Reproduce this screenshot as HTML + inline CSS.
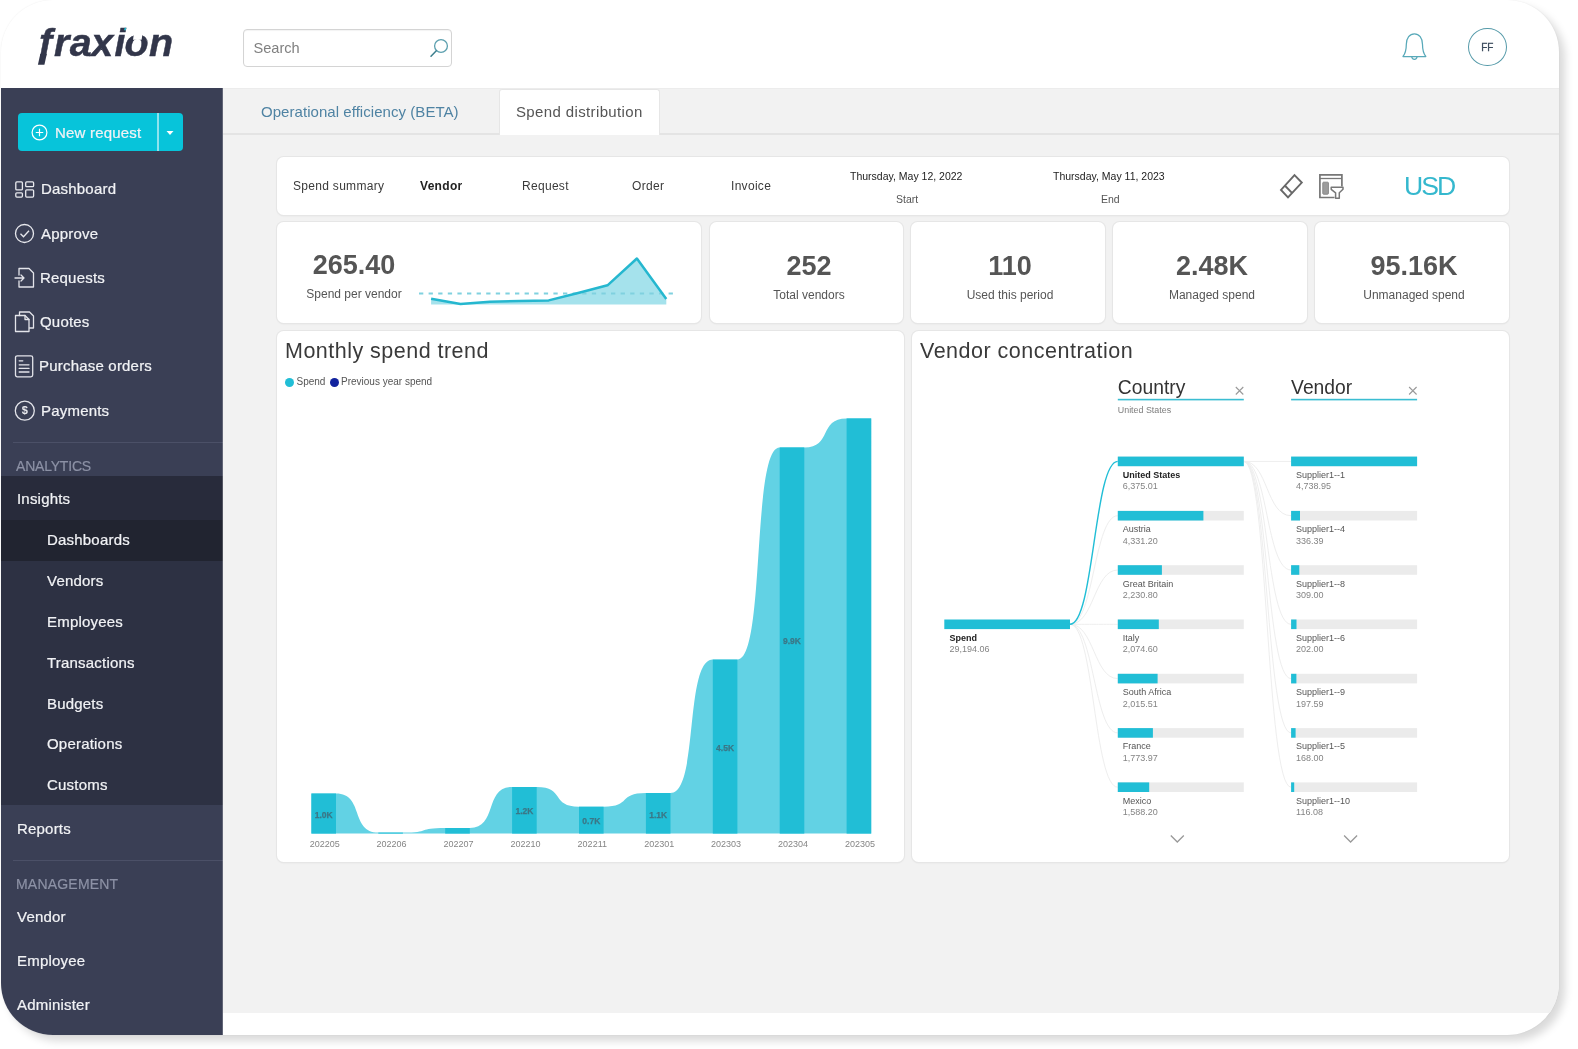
<!DOCTYPE html>
<html lang="en">
<head>
<meta charset="utf-8">
<title>Fraxion - Spend distribution</title>
<style>
*{box-sizing:border-box;margin:0;padding:0}
html,body{width:1578px;height:1049px;overflow:hidden;background:#fff}
body{font-family:"Liberation Sans",sans-serif;color:#333;position:relative}
.abs{position:absolute}
#frame{position:absolute;left:1px;top:0;width:1558px;height:1035px;border-radius:52px;overflow:hidden;background:#fff;
  box-shadow:6px 6px 8px rgba(0,0,0,.15),0 0 1.500px rgba(0,0,0,.08)}
#in{position:absolute;left:-1px;top:0;width:1578px;height:1049px;will-change:transform}
#side{position:absolute;left:0;top:88px;width:223px;height:960px;background:#3a3f55}
#main{position:absolute;left:223px;top:88px;width:1339px;height:925px;background:#f2f2f2}
.t{position:absolute;white-space:nowrap;line-height:1}
.nav{color:#f1f2f5;font-size:15px;-webkit-text-stroke:.22px #f1f2f5;letter-spacing:.2px}
.sec{color:#8c91a5;font-size:14px;letter-spacing:-.2px;-webkit-text-stroke:.2px #8c91a5}
.card{position:absolute;background:#fff;border-radius:6.500px;box-shadow:0 0 0 1px #e6e6e6,0 1px 2px rgba(0,0,0,.08)}
.big{font-weight:bold;font-size:27px;color:#555;text-align:center}
.sub{font-size:12px;color:#555;text-align:center}
.ft{font-size:12px;color:#3a3a3a;letter-spacing:.3px}
.lbl{font-size:9px;fill:#555}
</style>
</head>
<body>
<div id="frame"><div id="in">

<!-- HEADER -->
<div class="t" id="logo" style="left:39px;top:22.500px;font-size:39.500px;font-weight:bold;font-style:italic;color:#32364a;letter-spacing:-.6px;-webkit-text-stroke:.45px #32364a"><span style="letter-spacing:1.800px">f</span><span style="letter-spacing:.4px">r</span>a<span style="letter-spacing:1.500px">x</span><span style="letter-spacing:-1.200px">i</span><span style="letter-spacing:.6px">o</span>n</div>
<svg class="abs" style="left:36px;top:20px" width="140" height="50" viewBox="36 20 140 50"><path d="M40.300 54L46.800 54L44.400 64.700L37.900 64.700z" fill="#32364a"/><path d="M134.200 32L142.800 32L141.600 39.800L133 39.800z" fill="#fff"/><path d="M124.600 27.800L126.300 27.800L125.800 30.200L124.100 30.200z" fill="#27b9d0"/></svg>
<div class="abs" id="search" style="left:243px;top:29px;width:209px;height:38px;border:1px solid #d4d4d4;border-radius:4px;background:#fff;box-shadow:inset 0 1px 1px rgba(0,0,0,.05)"></div>
<div class="t" style="left:253.500px;top:41px;font-size:14.600px;color:#808080">Search</div>

<svg class="abs" style="left:426px;top:36px" width="26" height="24" viewBox="426 36 26 24" fill="none" stroke="#5b9fae" stroke-width="1.300" stroke-linecap="round"><circle cx="441" cy="46" r="6.400"/><path d="M436.300 50.700L431 56.300" stroke="#3d7f8e" stroke-width="1.500"/></svg>
<svg class="abs" style="left:1398px;top:29.200px" width="34" height="36" viewBox="1398 30 34 36" fill="none" stroke="#58a9b9" stroke-width="1.250" stroke-linejoin="round"><path d="M1403 57.500c2.600-3.400 3.300-6.500 3.300-12c0-6.500 3.500-10.700 8.100-10.700s8.100 4.200 8.100 10.700c0 5.500 .7 8.600 3.300 12z"/><path d="M1411.700 57.800c.4 1.700 1.400 2.500 2.700 2.500s2.300-.8 2.700-2.500"/></svg>
<div class="abs" style="left:1468px;top:28px;width:38.500px;height:38px;border-radius:50%;border:1.400px solid #559aa9"></div>
<div class="t" id="ff" style="left:1468px;width:38.500px;text-align:center;top:42.500px;font-size:10px;color:#3b4a5c;-webkit-text-stroke:.3px #3b4a5c">FF</div>

<!-- SIDEBAR -->
<div id="side"></div>
<div class="abs" style="left:0;top:476px;width:223px;height:329px;background:#2d3143"></div>
<div class="abs" style="left:0;top:476px;width:223px;height:44px;background:#282b3b"></div>
<div class="abs" style="left:0;top:520px;width:223px;height:41px;background:#212430"></div>
<div class="abs" style="left:13px;top:442px;width:210px;height:1px;background:#4b5067"></div>
<div class="abs" style="left:13px;top:860px;width:210px;height:1px;background:#4b5067"></div>

<div class="abs" style="left:222px;top:88px;width:1px;height:960px;background:rgba(242,242,242,.22)"></div>
<!-- New request button -->
<div class="abs" style="left:18px;top:113px;width:165px;height:38px;border-radius:4px;background:#07c4da"></div>
<div class="abs" style="left:157px;top:113px;width:2px;height:38px;background:#8fe3ee"></div>
<svg class="abs" style="left:31px;top:124px" width="17" height="17" viewBox="0 0 17 17" fill="none" stroke="#fff" stroke-width="1.2"><circle cx="8.5" cy="8.5" r="7.4"/><path d="M8.5 4.8v7.4M4.8 8.5h7.4"/></svg>
<div class="t nav" style="left:55px;top:125px">New request</div>
<svg class="abs" style="left:165px;top:129.800px" width="10" height="6" viewBox="0 0 10 6"><path d="M1.5 1h7L5 5z" fill="#fff"/></svg>

<!-- nav icons -->
<svg class="abs" style="left:14px;top:178px" width="22" height="22" viewBox="0 0 22 22" fill="none" stroke="#e8e9ee" stroke-width="1.3"><rect x="1.800" y="3.900" width="6.600" height="8" rx="1"/><rect x="11.700" y="3.900" width="7.900" height="4.800" rx="1"/><rect x="1.800" y="14.800" width="6.600" height="4.300" rx="1"/><rect x="11.700" y="11.800" width="7.900" height="7.300" rx="1"/></svg>
<div class="t nav" style="left:41px;top:181px">Dashboard</div>

<svg class="abs" style="left:14px;top:223px" width="22" height="22" viewBox="0 0 22 22" fill="none" stroke="#e8e9ee" stroke-width="1.3"><circle cx="10.5" cy="10.5" r="9"/><path d="M6.5 10.8l3 3 5.5-6"/></svg>
<div class="t nav" style="left:41px;top:226px">Approve</div>

<svg class="abs" style="left:13.800px;top:266px" width="22" height="24" viewBox="0 0 22 24" fill="none" stroke="#e3e4ea" stroke-width="1.3" stroke-linejoin="round" stroke-linecap="round"><path d="M5 9V2.5h10l4.5 4.5v14H5v-6"/><path d="M1 12h9M7 9l3 3-3 3"/></svg>
<div class="t nav" style="left:40px;top:270px">Requests</div>

<svg class="abs" style="left:13.800px;top:310px" width="22" height="24" viewBox="0 0 22 24" fill="none" stroke="#e3e4ea" stroke-width="1.3" stroke-linejoin="round" stroke-linecap="round"><path d="M1.5 5.5h9.5l4 4v12H1.5z"/><path d="M5.5 5.500V2h10l4 4v12h-4"/><path d="M11 5.500v4h4"/></svg>
<div class="t nav" style="left:40px;top:314px">Quotes</div>

<svg class="abs" style="left:13.800px;top:354px" width="22" height="24" viewBox="0 0 22 24" fill="none" stroke="#e3e4ea" stroke-width="1.3" stroke-linejoin="round" stroke-linecap="round"><rect x="1.500" y="1.800" width="17.200" height="21" rx="1.800"/><path d="M5.200 6.800h3.600M5.200 10.800h9.800M5.200 14.400h9.800M5.200 18h9.800"/></svg>
<div class="t nav" style="left:39px;top:358px">Purchase orders</div>

<svg class="abs" style="left:14px;top:400px" width="23" height="23" viewBox="0 0 23 23" fill="none" stroke="#e3e4ea" stroke-width="1.300"><circle cx="10.800" cy="10.700" r="9.500"/></svg>
<div class="t" style="left:21.800px;top:405px;font-size:11px;font-weight:bold;color:#e8e9ee">$</div>
<div class="t nav" style="left:41px;top:403px">Payments</div>

<div class="t sec" style="left:16px;top:459px">ANALYTICS</div>
<div class="t nav" style="left:17px;top:491px">Insights</div>
<div class="t nav" style="left:47px;top:532px">Dashboards</div>
<div class="t nav" style="left:47px;top:573px">Vendors</div>
<div class="t nav" style="left:47px;top:614px">Employees</div>
<div class="t nav" style="left:47px;top:655px">Transactions</div>
<div class="t nav" style="left:47px;top:696px">Budgets</div>
<div class="t nav" style="left:47px;top:736px">Operations</div>
<div class="t nav" style="left:47px;top:777px">Customs</div>
<div class="t nav" style="left:17px;top:821px">Reports</div>
<div class="t sec" style="left:16px;top:877px;letter-spacing:.2px">MANAGEMENT</div>
<div class="t nav" style="left:17px;top:909px">Vendor</div>
<div class="t nav" style="left:17px;top:953px">Employee</div>
<div class="t nav" style="left:17px;top:997px">Administer</div>

<!-- MAIN -->
<div id="main"></div>
<div class="abs" style="left:223px;top:88px;width:1339px;height:1px;background:#ececec"></div>
<div class="abs" style="left:223px;top:133px;width:1339px;height:1.500px;background:#e4e4e4"></div>
<div class="abs" style="left:499px;top:89px;width:161px;height:45.500px;background:#fff;border:1px solid #e6e6e6;border-bottom:none;border-radius:3px 3px 0 0"></div>
<div class="t" id="tab1" style="left:261px;top:104px;font-size:15px;color:#4f83a3;letter-spacing:.05px">Operational efficiency (BETA)</div>
<div class="t" id="tab2" style="left:516px;top:104px;font-size:15px;color:#555;letter-spacing:.37px">Spend distribution</div>

<!-- filter card -->
<div class="card" style="left:277px;top:157px;width:1232px;height:58px"></div>
<div class="t ft" id="f1" style="left:293px;top:180px">Spend summary</div>
<div class="t ft" id="f2" style="left:420px;top:180px;font-weight:bold;color:#222">Vendor</div>
<div class="t ft" id="f3" style="left:522px;top:180px">Request</div>
<div class="t ft" id="f4" style="left:632px;top:180px">Order</div>
<div class="t ft" id="f5" style="left:731px;top:180px">Invoice</div>
<div class="t" id="d1" style="left:850px;top:171px;font-size:10.5px;color:#222">Thursday, May 12, 2022</div>
<div class="t" id="d2" style="left:896px;top:194px;font-size:10.5px;color:#555">Start</div>
<div class="t" id="d3" style="left:1053px;top:171px;font-size:10.5px;color:#222">Thursday, May 11, 2023</div>
<div class="t" id="d4" style="left:1101px;top:194px;font-size:10.5px;color:#555">End</div>
<div class="t" id="usd" style="left:1404px;top:172.500px;font-size:26.600px;color:#35b8ce;letter-spacing:-2px">USD</div>

<!-- eraser + filter icons -->
<svg class="abs" style="left:1276px;top:170px" width="32" height="32" viewBox="1276 170 32 32" fill="none" stroke="#686868" stroke-width="1.900" stroke-linejoin="miter"><path d="M1294.500 175.100L1301.800 182.600L1288 197.400L1281 189.900z"/><path d="M1284.800 185.500L1292.200 193.200"/></svg>
<svg class="abs" style="left:1316px;top:171px" width="32" height="32" viewBox="1316 171 32 32" fill="none" stroke="#777" stroke-width="1.700"><path d="M1334.500 197.500H1319.900V174.900H1341.900V186.500"/><path d="M1319.900 178.500H1341.900" stroke-width="1.300"/><rect x="1322.800" y="182.200" width="5.600" height="12" rx=".8" fill="#9c9c9c" stroke="#8a8a8a" stroke-width="1"/><path d="M1331.200 187.200H1343L1343 189.300L1339.300 192.800V198.300H1335.600V192.800L1331.200 189.300z" fill="#fff" stroke-width="1.500" stroke-linejoin="round"/></svg>
<!-- KPI cards -->
<div class="card" style="left:277px;top:222px;width:424px;height:101px"></div>
<div class="card" style="left:710px;top:222px;width:193px;height:101px"></div>
<div class="card" style="left:911px;top:222px;width:194px;height:101px"></div>
<div class="card" style="left:1113px;top:222px;width:194px;height:101px"></div>
<div class="card" style="left:1315px;top:222px;width:194px;height:101px"></div>
<div class="t big" id="k1" style="left:254px;width:200px;top:252px">265.40</div>
<div class="t sub" id="s1" style="left:254px;width:200px;top:288px">Spend per vendor</div>
<div class="t big" id="k2" style="left:712px;width:194px;top:253px">252</div>
<div class="t sub" id="s2" style="left:712px;width:194px;top:289px">Total vendors</div>
<div class="t big" id="k3" style="left:913px;width:194px;top:253px">110</div>
<div class="t sub" id="s3" style="left:913px;width:194px;top:289px">Used this period</div>
<div class="t big" id="k4" style="left:1115px;width:194px;top:253px">2.48K</div>
<div class="t sub" id="s4" style="left:1115px;width:194px;top:289px">Managed spend</div>
<div class="t big" id="k5" style="left:1317px;width:194px;top:253px">95.16K</div>
<div class="t sub" id="s5" style="left:1317px;width:194px;top:289px">Unmanaged spend</div>
<svg class="abs" style="left:410px;top:250px" width="280" height="64" viewBox="410 250 280 64">
<path d="M431.1 298.700L460.500 304.100L489.900 301.800L519.300 301.100L548.700 300.400L578.100 293L607.500 285.300L636.900 258.500L666.300 299V304.500H431.100z" fill="#a5e2ec"/>
<path d="M419 293.500H675" stroke="#80d1df" stroke-width="1.800" stroke-dasharray="4.300 5.300" fill="none"/>
<path d="M431.1 298.700L460.500 304.100L489.900 301.800L519.300 301.100L548.700 300.400L578.100 293L607.500 285.300L636.900 258.500L666.300 299" fill="none" stroke="#25b7cf" stroke-width="2.500" stroke-linejoin="round"/>
</svg>

<!-- chart panels -->
<div class="card" style="left:277px;top:331px;width:627px;height:531px"></div>
<div class="card" style="left:912px;top:331px;width:597px;height:531px"></div>
<div class="t" id="h1" style="left:285px;top:341.300px;font-size:21.500px;color:#3a3a3a;letter-spacing:.48px">Monthly spend trend</div>
<div class="t" id="h2" style="left:920px;top:341.300px;font-size:21.500px;color:#3a3a3a;letter-spacing:.5px">Vendor concentration</div>

<!-- ribbon chart -->
<svg class="abs" style="left:277px;top:400px" width="627" height="460" viewBox="277 400 627 460">
<path d="M311.4 793.5H336C364.3 793.5 350 832.6 378.3 832.6H402.9C431.2 832.6 416.9 828 445.2 828H469.8C498.1 828 483.8 787 512.1 787H536.7C565 787 550.7 806.7 579 806.7H603.6C631.9 806.7 617.6 793 645.9 793H670.5C698.8 793 684.5 659.6 712.8 659.6H737.4C765.7 659.6 751.4 447.4 779.7 447.4H804.3C832.6 447.4 818.3 418.4 846.6 418.4H871.2V833.6H311.4z" fill="#62d2e4"/>
<rect x="311.4" y="793.5" width="24.6" height="40.1" fill="#21bed6"/>
<rect x="378.3" y="832.6" width="24.6" height="1" fill="#21bed6"/>
<rect x="445.2" y="828" width="24.6" height="5.6" fill="#21bed6"/>
<rect x="512.1" y="787" width="24.6" height="46.6" fill="#21bed6"/>
<rect x="579" y="806.7" width="24.6" height="26.9" fill="#21bed6"/>
<rect x="645.9" y="793" width="24.6" height="40.6" fill="#21bed6"/>
<rect x="712.8" y="659.6" width="24.6" height="174" fill="#21bed6"/>
<rect x="779.7" y="447.4" width="24.6" height="386.2" fill="#21bed6"/>
<rect x="846.6" y="418.4" width="24.6" height="415.2" fill="#21bed6"/>
<text x="324.7" y="846.900" text-anchor="middle" font-size="9" fill="#858585">202205</text>
<text x="323.7" y="817.5" text-anchor="middle" font-size="8.500" font-weight="bold" fill="#3b7787" stroke="#3b7787" stroke-width=".25">1.0K</text>
<text x="391.6" y="846.900" text-anchor="middle" font-size="9" fill="#858585">202206</text>
<text x="458.5" y="846.900" text-anchor="middle" font-size="9" fill="#858585">202207</text>
<text x="525.4" y="846.900" text-anchor="middle" font-size="9" fill="#858585">202210</text>
<text x="524.4" y="813.5" text-anchor="middle" font-size="8.500" font-weight="bold" fill="#3b7787" stroke="#3b7787" stroke-width=".25">1.2K</text>
<text x="592.3" y="846.900" text-anchor="middle" font-size="9" fill="#858585">202211</text>
<text x="591.3" y="824" text-anchor="middle" font-size="8.500" font-weight="bold" fill="#3b7787" stroke="#3b7787" stroke-width=".25">0.7K</text>
<text x="659.2" y="846.900" text-anchor="middle" font-size="9" fill="#858585">202301</text>
<text x="658.2" y="817.5" text-anchor="middle" font-size="8.500" font-weight="bold" fill="#3b7787" stroke="#3b7787" stroke-width=".25">1.1K</text>
<text x="726.1" y="846.900" text-anchor="middle" font-size="9" fill="#858585">202303</text>
<text x="725.1" y="750.5" text-anchor="middle" font-size="8.500" font-weight="bold" fill="#3b7787" stroke="#3b7787" stroke-width=".25">4.5K</text>
<text x="793" y="846.900" text-anchor="middle" font-size="9" fill="#858585">202304</text>
<text x="792" y="644" text-anchor="middle" font-size="8.500" font-weight="bold" fill="#3b7787" stroke="#3b7787" stroke-width=".25">9.9K</text>
<text x="859.9" y="846.900" text-anchor="middle" font-size="9" fill="#858585">202305</text>
</svg>
<div class="abs" style="left:285px;top:378px;width:9px;height:9px;border-radius:50%;background:#21bed6"></div>
<div class="t" id="lg1" style="left:296.500px;top:377px;font-size:10px;color:#555">Spend</div>
<div class="abs" style="left:329.500px;top:378px;width:9px;height:9px;border-radius:50%;background:#12239e"></div>
<div class="t" id="lg2" style="left:341px;top:377px;font-size:10px;color:#555">Previous year spend</div>
<!-- vendor concentration -->
<svg class="abs" style="left:911px;top:365px" width="598" height="495" viewBox="911 365 598 495" font-size="9">
<path d="M1070 624.3 C1094 624.3 1094 515.7 1117.8 515.7" fill="none" stroke="#eeeeee" stroke-width="1"/>
<path d="M1070 624.3 C1094 624.3 1094 570 1117.8 570" fill="none" stroke="#eeeeee" stroke-width="1"/>
<path d="M1070 624.3 C1094 624.3 1094 624.3 1117.8 624.3" fill="none" stroke="#eeeeee" stroke-width="1"/>
<path d="M1070 624.3 C1094 624.3 1094 678.6 1117.8 678.6" fill="none" stroke="#eeeeee" stroke-width="1"/>
<path d="M1070 624.3 C1094 624.3 1094 732.9 1117.8 732.9" fill="none" stroke="#eeeeee" stroke-width="1"/>
<path d="M1070 624.3 C1094 624.3 1094 787.2 1117.8 787.2" fill="none" stroke="#eeeeee" stroke-width="1"/>
<path d="M1243.800 461.4 C1268 461.4 1266 515.7 1291.1 515.7" fill="none" stroke="#eeeeee" stroke-width="1"/>
<path d="M1243.800 461.4 C1268 461.4 1266 570 1291.1 570" fill="none" stroke="#eeeeee" stroke-width="1"/>
<path d="M1243.800 461.4 C1268 461.4 1266 624.3 1291.1 624.3" fill="none" stroke="#eeeeee" stroke-width="1"/>
<path d="M1243.800 461.4 C1268 461.4 1266 678.6 1291.1 678.6" fill="none" stroke="#eeeeee" stroke-width="1"/>
<path d="M1243.800 461.4 C1268 461.4 1266 732.9 1291.1 732.9" fill="none" stroke="#eeeeee" stroke-width="1"/>
<path d="M1243.800 461.4 C1268 461.4 1266 787.2 1291.1 787.2" fill="none" stroke="#eeeeee" stroke-width="1"/>
<path d="M1243.800 461.4 H1291.1" fill="none" stroke="#eeeeee" stroke-width="1"/>
<path d="M1070 624.3 C1094 624.3 1094 461.4 1117.8 461.4" fill="none" stroke="#21bed6" stroke-width="1.400"/>
<rect x="944.3" y="619.5" width="125.700" height="9.600" fill="#21bed6"/>
<text x="949.5" y="640.500" font-weight="bold" fill="#222">Spend</text><text x="949.500" y="652" fill="#848484">29,194.06</text>
<rect x="1117.8" y="456.6" width="126" height="9.600" fill="#ebebeb"/><rect x="1117.8" y="456.6" width="126" height="9.600" fill="#21bed6"/><text x="1122.8" y="477.9" font-weight="bold" fill="#222">United States</text><text x="1122.8" y="489.4" fill="#848484">6,375.01</text>
<rect x="1117.8" y="510.9" width="126" height="9.600" fill="#ebebeb"/><rect x="1117.8" y="510.9" width="85.6" height="9.600" fill="#21bed6"/><text x="1122.8" y="532.2" fill="#555">Austria</text><text x="1122.8" y="543.7" fill="#848484">4,331.20</text>
<rect x="1117.8" y="565.2" width="126" height="9.600" fill="#ebebeb"/><rect x="1117.8" y="565.2" width="44.1" height="9.600" fill="#21bed6"/><text x="1122.8" y="586.5" fill="#555">Great Britain</text><text x="1122.8" y="598" fill="#848484">2,230.80</text>
<rect x="1117.8" y="619.5" width="126" height="9.600" fill="#ebebeb"/><rect x="1117.8" y="619.5" width="41" height="9.600" fill="#21bed6"/><text x="1122.8" y="640.8" fill="#555">Italy</text><text x="1122.8" y="652.3" fill="#848484">2,074.60</text>
<rect x="1117.8" y="673.8" width="126" height="9.600" fill="#ebebeb"/><rect x="1117.8" y="673.8" width="39.8" height="9.600" fill="#21bed6"/><text x="1122.8" y="695.1" fill="#555">South Africa</text><text x="1122.8" y="706.6" fill="#848484">2,015.51</text>
<rect x="1117.8" y="728.1" width="126" height="9.600" fill="#ebebeb"/><rect x="1117.8" y="728.1" width="35.1" height="9.600" fill="#21bed6"/><text x="1122.8" y="749.4" fill="#555">France</text><text x="1122.8" y="760.9" fill="#848484">1,773.97</text>
<rect x="1117.8" y="782.4" width="126" height="9.600" fill="#ebebeb"/><rect x="1117.8" y="782.4" width="31.4" height="9.600" fill="#21bed6"/><text x="1122.8" y="803.7" fill="#555">Mexico</text><text x="1122.8" y="815.2" fill="#848484">1,588.20</text>
<rect x="1291.1" y="456.6" width="126" height="9.600" fill="#ebebeb"/><rect x="1291.1" y="456.6" width="126" height="9.600" fill="#21bed6"/><text x="1296.1" y="477.9" fill="#555">Supplier1--1</text><text x="1296.1" y="489.4" fill="#848484">4,738.95</text>
<rect x="1291.1" y="510.9" width="126" height="9.600" fill="#ebebeb"/><rect x="1291.1" y="510.9" width="8.9" height="9.600" fill="#21bed6"/><text x="1296.1" y="532.2" fill="#555">Supplier1--4</text><text x="1296.1" y="543.7" fill="#848484">336.39</text>
<rect x="1291.1" y="565.2" width="126" height="9.600" fill="#ebebeb"/><rect x="1291.1" y="565.2" width="8.2" height="9.600" fill="#21bed6"/><text x="1296.1" y="586.5" fill="#555">Supplier1--8</text><text x="1296.1" y="598" fill="#848484">309.00</text>
<rect x="1291.1" y="619.5" width="126" height="9.600" fill="#ebebeb"/><rect x="1291.1" y="619.5" width="5.4" height="9.600" fill="#21bed6"/><text x="1296.1" y="640.8" fill="#555">Supplier1--6</text><text x="1296.1" y="652.3" fill="#848484">202.00</text>
<rect x="1291.1" y="673.8" width="126" height="9.600" fill="#ebebeb"/><rect x="1291.1" y="673.8" width="5.3" height="9.600" fill="#21bed6"/><text x="1296.1" y="695.1" fill="#555">Supplier1--9</text><text x="1296.1" y="706.6" fill="#848484">197.59</text>
<rect x="1291.1" y="728.1" width="126" height="9.600" fill="#ebebeb"/><rect x="1291.1" y="728.1" width="4.5" height="9.600" fill="#21bed6"/><text x="1296.1" y="749.4" fill="#555">Supplier1--5</text><text x="1296.1" y="760.9" fill="#848484">168.00</text>
<rect x="1291.1" y="782.4" width="126" height="9.600" fill="#ebebeb"/><rect x="1291.1" y="782.4" width="3.1" height="9.600" fill="#21bed6"/><text x="1296.1" y="803.7" fill="#555">Supplier1--10</text><text x="1296.1" y="815.2" fill="#848484">116.08</text>
<text x="1117.8" y="394" font-size="19.300" fill="#333">Country</text><rect x="1117.8" y="398.800" width="126" height="1.600" fill="#3bbdd2"/><path d="M1235.8 387l7.500 7.500m0 -7.500l-7.500 7.500" stroke="#999" stroke-width="1.100" fill="none"/>
<text x="1291.1" y="394" font-size="19.300" fill="#333">Vendor</text><rect x="1291.1" y="398.800" width="126" height="1.600" fill="#3bbdd2"/><path d="M1409.1 387l7.500 7.500m0 -7.500l-7.500 7.500" stroke="#999" stroke-width="1.100" fill="none"/>
<text x="1117.8" y="412.500" font-size="8.900" fill="#7d7d7d">United States</text>
<path d="M1170.8 835.500l6.500 6.500l6.500 -6.500" stroke="#999" stroke-width="1.300" fill="none"/>
<path d="M1344.1 835.500l6.500 6.500l6.500 -6.500" stroke="#999" stroke-width="1.300" fill="none"/>
</svg>

</div></div>
</body>
</html>
